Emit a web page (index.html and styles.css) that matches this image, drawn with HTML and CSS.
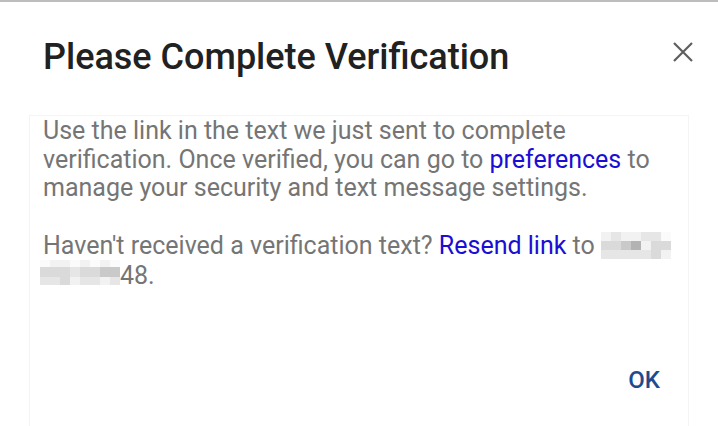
FILE: index.html
```html
<!DOCTYPE html>
<html lang="en">
<head>
    <meta charset="UTF-8">
    <title>Please Complete Verification</title>
    <link rel="stylesheet" href="styles.css">
</head>
<body>
    <div class="dialog">
        <div class="dialog-header">
            <h1 class="dialog-title">Please Complete Verification</h1>
            <button class="close-btn" aria-label="Close">
                <svg width="22" height="22" viewBox="0 0 22 22">
                    <path d="M2 2 L20 20 M20 2 L2 20" stroke="#5f5f5f" stroke-width="2.2" fill="none"/>
                </svg>
            </button>
        </div>
        <div class="dialog-panel">
            <p class="msg">Use the link in the text we just sent to complete verification. Once verified, you can go to <a href="#">preferences</a> to manage your security and text message settings.</p>
            <p class="msg">Haven't received a verification text? <a href="#">Resend link</a> to <span class="redact r-a"><i class="c0"></i><i class="c1"></i><i class="c0"></i><i class="c0"></i><i class="c1"></i><i class="c1"></i><i class="w"></i><i class="c2"></i><i class="c2"></i><i class="c3"></i><i class="c4"></i><i class="c0"></i><i class="c2"></i><i class="c2"></i><i class="c1"></i><i class="c1"></i><i class="c1"></i><i class="c1"></i><i class="c1"></i><i class="c2"></i><i class="c0"></i></span> <span class="redact r-b"><i class="w"></i><i class="c0"></i><i class="c0"></i><i class="w"></i><i class="c0"></i><i class="w"></i><i class="c0"></i><i class="w"></i><i class="c2"></i><i class="c2"></i><i class="c2"></i><i class="c1"></i><i class="c2"></i><i class="c2"></i><i class="c3"></i><i class="c3"></i><i class="c1"></i><i class="c1"></i><i class="c2"></i><i class="c0"></i><i class="c1"></i><i class="c1"></i><i class="c0"></i><i class="c1"></i></span>48.</p>
            <div class="dialog-actions">
                <button class="ok-btn">OK</button>
            </div>
        </div>
    </div>
</body>
</html>
```

FILE: styles.css
```css
html, body {
    margin: 0;
    background: #ffffff;
}

body {
    font-family: Roboto, "Liberation Sans", sans-serif;
    border-top: 2px solid #bdbdbd;
    height: 424px;
    overflow: hidden;
}

.dialog {
    display: flex;
    flex-direction: column;
    height: 100%;
}

.dialog-header {
    display: flex;
    justify-content: space-between;
    align-items: flex-start;
    box-sizing: border-box;
    padding: 35px 24px 0 43px;
    height: 113px;
}

.dialog-title {
    margin: 0;
    font-size: 36px;
    font-weight: 500;
    color: #212121;
    line-height: 40px;
}

.close-btn {
    background: none;
    border: none;
    padding: 0;
    margin-top: 4px;
    cursor: pointer;
}

.dialog-panel {
    flex: 1;
    margin: 0 29px;
    padding: 1px 14px 0 13px;
    border: 1px solid #f4f4f4;
    border-bottom: none;
    display: flex;
    flex-direction: column;
}

.msg {
    margin: 0 0 29px 0;
    font-size: 25px;
    line-height: 28.5px;
    color: #757575;
}

.msg a {
    color: #1a0dd4;
    text-decoration: none;
}

/* pixelated phone number */
.redact {
    display: inline-block;
    overflow: hidden;
}

.redact i {
    float: left;
    width: 10px;
    height: 9px;
}

.r-a {
    width: 70px;
    height: 27px;
    vertical-align: -5px;
}

.r-b {
    width: 80px;
    height: 25px;
    margin-left: -3px;
    vertical-align: -1px;
}

.r-b i:nth-child(-n+8) {
    height: 7px;
}

.r-b i:nth-child(n+9):nth-child(-n+16) {
    height: 10px;
}

.r-b i:nth-child(n+17) {
    height: 8px;
}

.w { background: #fbfbfb; }
.c0 { background: #f2f2f2; }
.c1 { background: #e6e6e6; }
.c2 { background: #dadada; }
.c3 { background: #c9c9c9; }
.c4 { background: #b3b3b3; }

.dialog-actions {
    display: flex;
    justify-content: flex-end;
    margin-top: 46px;
}

.ok-btn {
    background: none;
    border: none;
    font-family: Roboto, "Liberation Sans", sans-serif;
    font-size: 24px;
    font-weight: 500;
    line-height: 28px;
    color: #1f4b8e;
    padding: 0 14px 0 0;
    cursor: pointer;
}
```
